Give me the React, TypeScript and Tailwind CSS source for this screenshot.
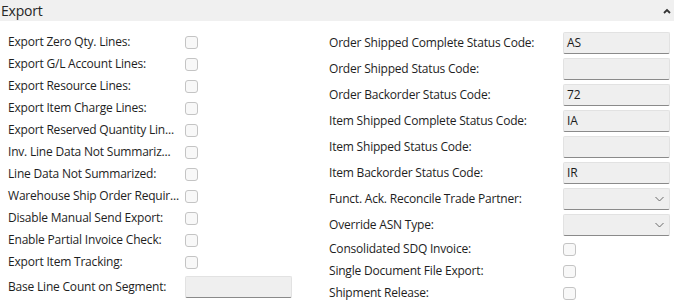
import React from "react";

const font = { fontFamily: '"Segoe UI", "Open Sans", "Noto Sans", sans-serif' };

function Checkbox() {
  return <div className="h-[13px] w-[13px] rounded-[3px] border border-[#c4c4c4] bg-[#f8f8f8]" />;
}

function TextBox({ value }: { value?: string }) {
  return (
    <div className="flex h-[22px] w-[107px] items-center rounded-[2px] border border-[#e2e2e2] border-b-[#8a8a8a] bg-[#efefef] pl-[3px] text-[12px] tracking-[-0.2px] text-[#1b1b1b]">
      {value}
    </div>
  );
}

function Select() {
  return (
    <div className="flex h-[22px] w-[107px] items-center justify-end rounded-[2px] border border-[#e2e2e2] border-b-[#8a8a8a] bg-[#efefef] pr-[5px]">
      <svg width="9" height="6" viewBox="0 0 9 6">
        <path d="M0.5 1 L4.5 5 L8.5 1" fill="none" stroke="#6b6b6b" strokeWidth="1" />
      </svg>
    </div>
  );
}

const left: [string, "cb" | "tb"][] = [
  ["Export Zero Qty. Lines:", "cb"],
  ["Export G/L Account Lines:", "cb"],
  ["Export Resource Lines:", "cb"],
  ["Export Item Charge Lines:", "cb"],
  ["Export Reserved Quantity Lin...", "cb"],
  ["Inv. Line Data Not Summariz...", "cb"],
  ["Line Data Not Summarized:", "cb"],
  ["Warehouse Ship Order Requir...", "cb"],
  ["Disable Manual Send Export:", "cb"],
  ["Enable Partial Invoice Check:", "cb"],
  ["Export Item Tracking:", "cb"],
  ["Base Line Count on Segment:", "tb"],
];

const right: [string, "cb" | "tb" | "sel", string?][] = [
  ["Order Shipped Complete Status Code:", "tb", "AS"],
  ["Order Shipped Status Code:", "tb", ""],
  ["Order Backorder Status Code:", "tb", "72"],
  ["Item Shipped Complete Status Code:", "tb", "IA"],
  ["Item Shipped Status Code:", "tb", ""],
  ["Item Backorder Status Code:", "tb", "IR"],
  ["Funct. Ack. Reconcile Trade Partner:", "sel"],
  ["Override ASN Type:", "sel"],
  ["Consolidated SDQ Invoice:", "cb"],
  ["Single Document File Export:", "cb"],
  ["Shipment Release:", "cb"],
];

export default function App() {
  return (
    <div className="h-[306px] w-[674px] overflow-hidden bg-white text-[#1e1e1e]" style={font}>
      <div className="flex h-[21px] items-center justify-between bg-[#f0f0f0] pl-[1px] pr-[3px]">
        <span className="text-[14px] leading-none tracking-[-0.2px] text-[#262626]">Export</span>
        <svg width="8" height="6" viewBox="0 0 8 6">
          <path d="M1 5 L4 2 L7 5" fill="none" stroke="#333" strokeWidth="1.8" />
        </svg>
      </div>
      <div className="flex pt-[10px]">
        <div className="w-[321px] pl-[8px]">
          {left.map(([label, kind]) => (
            <div key={label} className={`flex items-center ${kind === "tb" ? "h-[26px] pt-[1px]" : "h-[22px]"}`}>
              <div className="w-[177px] whitespace-nowrap text-[12px] leading-[16px] tracking-[-0.2px]">{label}</div>
              <div>{kind === "cb" ? <Checkbox /> : <TextBox />}</div>
            </div>
          ))}
        </div>
        <div className="-mt-[1px] flex-1 pl-[8px]">
          {right.map(([label, kind, val]) => (
            <div key={label} className={`flex items-center ${kind === "cb" ? "h-[22px]" : "h-[26px]"}`}>
              <div className="w-[234px] whitespace-nowrap text-[12px] leading-[16px] tracking-[-0.2px]">{label}</div>
              <div>
                {kind === "cb" ? <Checkbox /> : kind === "sel" ? <Select /> : <TextBox value={val} />}
              </div>
            </div>
          ))}
        </div>
      </div>
    </div>
  );
}
